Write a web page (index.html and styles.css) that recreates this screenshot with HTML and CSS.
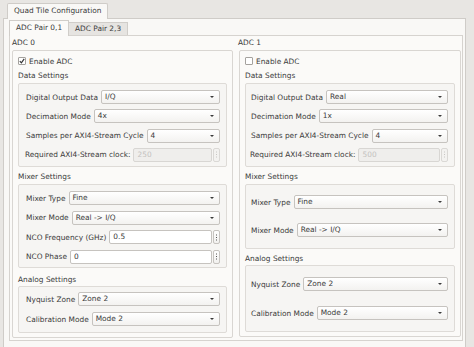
FILE: index.html
```html
<!DOCTYPE html>
<html>
<head>
<meta charset="utf-8">
<link rel="stylesheet" href="styles.css">
</head>
<body>
<div class="window">
  <div class="outer-tabs">
    <div class="otab">Quad Tile Configuration</div>
  </div>
  <div class="outer-pane">
    <div class="inner-tabs">
      <div class="itab active">ADC Pair 0,1</div>
      <div class="itab">ADC Pair 2,3</div>
    </div>
    <div class="inner-pane">
      <div class="col col-left">
        <div class="col-title">ADC 0</div>
        <div class="group">
          <div class="check-row">
            <span class="checkbox"><svg width="6" height="6" viewBox="0 0 6 6"><path d="M0.8 3.1 L2.4 4.8 L5.2 0.9" fill="none" stroke="#333" stroke-width="1.2"/></svg></span>
            <span>Enable ADC</span>
          </div>
          <div class="sec-title">Data Settings</div>
          <div class="box box-data">
            <div class="row"><span class="lbl">Digital Output Data</span><div class="combo">I/Q<i class="arrow"></i></div></div>
            <div class="row"><span class="lbl">Decimation Mode</span><div class="combo">4x<i class="arrow"></i></div></div>
            <div class="row"><span class="lbl">Samples per AXI4-Stream Cycle</span><div class="combo">4<i class="arrow"></i></div></div>
            <div class="row"><span class="lbl lbl-dis">Required AXI4-Stream clock:</span><div class="field disabled">250</div><div class="spin disabled"><i class="dots"></i></div></div>
          </div>
          <div class="sec-title sec-mixer">Mixer Settings</div>
          <div class="box box-mixer-l">
            <div class="row"><span class="lbl">Mixer Type</span><div class="combo">Fine<i class="arrow"></i></div></div>
            <div class="row"><span class="lbl">Mixer Mode</span><div class="combo">Real -&gt; I/Q<i class="arrow"></i></div></div>
            <div class="row"><span class="lbl">NCO Frequency (GHz)</span><div class="field">0.5</div><div class="spin"><i class="dots"></i></div></div>
            <div class="row"><span class="lbl">NCO Phase</span><div class="field">0</div><div class="spin"><i class="dots"></i></div></div>
          </div>
          <div class="sec-title sec-analog-l">Analog Settings</div>
          <div class="box box-analog-l">
            <div class="row"><span class="lbl">Nyquist Zone</span><div class="combo">Zone 2<i class="arrow"></i></div></div>
            <div class="row"><span class="lbl">Calibration Mode</span><div class="combo">Mode 2<i class="arrow"></i></div></div>
          </div>
        </div>
      </div>
      <div class="col col-right">
        <div class="col-title">ADC 1</div>
        <div class="group">
          <div class="check-row">
            <span class="checkbox"></span>
            <span>Enable ADC</span>
          </div>
          <div class="sec-title">Data Settings</div>
          <div class="box box-data">
            <div class="row"><span class="lbl">Digital Output Data</span><div class="combo">Real<i class="arrow"></i></div></div>
            <div class="row"><span class="lbl">Decimation Mode</span><div class="combo">1x<i class="arrow"></i></div></div>
            <div class="row"><span class="lbl">Samples per AXI4-Stream Cycle</span><div class="combo">4<i class="arrow"></i></div></div>
            <div class="row"><span class="lbl lbl-dis">Required AXI4-Stream clock:</span><div class="field disabled">500</div><div class="spin disabled"><i class="dots"></i></div></div>
          </div>
          <div class="sec-title sec-mixer">Mixer Settings</div>
          <div class="box box-mixer-r">
            <div class="row"><span class="lbl">Mixer Type</span><div class="combo">Fine<i class="arrow"></i></div></div>
            <div class="row"><span class="lbl">Mixer Mode</span><div class="combo">Real -&gt; I/Q<i class="arrow"></i></div></div>
          </div>
          <div class="sec-title sec-analog-r">Analog Settings</div>
          <div class="box box-analog-r">
            <div class="row"><span class="lbl">Nyquist Zone</span><div class="combo">Zone 2<i class="arrow"></i></div></div>
            <div class="row"><span class="lbl">Calibration Mode</span><div class="combo">Mode 2<i class="arrow"></i></div></div>
          </div>
        </div>
      </div>
    </div>
  </div>
</div>
</body>
</html>
```
FILE: styles.css
```css
* { box-sizing: border-box; }
html, body {
  margin: 0;
  padding: 0;
  background: #e8e6e3;
  font-family: "DejaVu Sans", "Liberation Sans", sans-serif;
  font-size: 7.4px;
  color: #3a3a3a;
  overflow: hidden;
}
.window {
  width: 474px;
  height: 347px;
  display: flex;
  flex-direction: column;
}
.outer-tabs {
  height: 18px;
  display: flex;
  align-items: flex-end;
  padding-left: 7px;
}
.otab {
  position: relative;
  z-index: 1;
  height: 16px;
  margin-bottom: -1px;
  width: 101px;
  padding-left: 6px;
  line-height: 14px;
  white-space: nowrap;
  background: #f9f8f6;
  border: 1px solid #cfccc8;
  border-bottom: none;
  border-radius: 2px 2px 0 0;
}
.outer-pane {
  flex: 1;
  margin-left: 3px;
  width: 463px;
  background: #f9f8f6;
  border: 1px solid #cfccc8;
  border-bottom: none;
  display: flex;
  flex-direction: column;
}
.inner-tabs {
  height: 16px;
  display: flex;
  align-items: flex-end;
  padding-left: 5px;
}
.itab {
  height: 13px;
  line-height: 12px;
  padding-left: 6px;
  width: 59px;
  white-space: nowrap;
  background: #e6e4e1;
  border: 1px solid #d0cdc9;
  border-bottom: none;
  border-left: none;
}
.itab.active {
  position: relative;
  z-index: 1;
  height: 16px;
  margin-bottom: -1px;
  line-height: 14px;
  width: 60px;
  background: #fbfaf8;
  border-left: 1px solid #d0cdc9;
}
.inner-pane {
  margin-left: 5px;
  width: 454px;
  height: 306px;
  background: #fbfaf8;
  border: 1px solid #d6d3cf;
  padding: 0 1px 0 2px;
  display: flex;
  gap: 5px;
}
.col {
  display: flex;
  flex-direction: column;
}
.col-left { width: 221px; }
.col-right { width: 223px; }
.col-right .group { margin-left: 1px; }
.col-right .box { padding-left: 4px; }
.col-title {
  height: 14px;
  line-height: 14px;
}
.group {
  border: 1px solid #d9d6d2;
  border-radius: 2px;
  padding: 3px 5px 4px 5px;
  display: flex;
  flex-direction: column;
}
.col-left .group { height: 288px; }
.col-right .group { height: 287px; }
.check-row {
  height: 14px;
  display: flex;
  align-items: center;
  gap: 3px;
}
.checkbox {
  width: 8px;
  height: 8px;
  border: 1px solid #a5a29e;
  border-radius: 1px;
  background: #ffffff;
  display: flex;
  align-items: center;
  justify-content: center;
}
.sec-title {
  height: 15px;
  padding-top: 1px;
  line-height: 14px;
}
.sec-mixer { height: 17px; padding-top: 3px; }
.sec-analog-l { height: 18px; padding-top: 5px; }
.sec-analog-r { height: 16px; padding-top: 3px; }
.box {
  border: 1px solid #dedbd7;
  border-radius: 2px;
  background: #f6f5f3;
  padding: 6px 6px 0 6px;
  display: flex;
  flex-direction: column;
}
.box-data { height: 84px; gap: 5.3px; }
.box-mixer-l { height: 84px; gap: 5.5px; }
.box-analog-l { height: 47px; gap: 6px; padding-top: 5px; }
.box-mixer-r { height: 65px; padding-top: 10px; gap: 14px; }
.box-analog-r { height: 67px; padding-top: 11px; gap: 15px; }
.row {
  height: 14px;
  display: flex;
  align-items: center;
}
.lbl {
  white-space: nowrap;
  padding-left: 1px;
  margin-right: 3px;
}
.lbl-dis { padding-left: 0; }
.combo {
  flex: 1;
  height: 14px;
  line-height: 12px;
  border: 1px solid #c6c3bf;
  border-radius: 2px;
  background: linear-gradient(#ffffff, #f3f2f0);
  padding-left: 3px;
  position: relative;
}
.arrow {
  position: absolute;
  right: 5px;
  top: 5px;
  width: 0;
  height: 0;
  border-left: 2px solid transparent;
  border-right: 2px solid transparent;
  border-top: 2.5px solid #3a3a3a;
}
.field {
  flex: 1;
  height: 14px;
  line-height: 12px;
  border: 1px solid #c6c3bf;
  border-radius: 2px;
  background: #ffffff;
  padding-left: 3px;
}
.field.disabled {
  background: #efeeec;
  border-color: #d8d6d3;
  color: #c4c2bf;
}
.spin {
  width: 7px;
  height: 14px;
  margin-left: 1px;
  border: 1px solid #c6c3bf;
  border-radius: 2px;
  background: linear-gradient(#ffffff, #f1f0ee);
  display: flex;
  align-items: center;
  justify-content: center;
}
.dots {
  width: 1px;
  height: 1px;
  background: #555;
  box-shadow: 0 -2.5px 0 #555, 0 2.5px 0 #555;
}
.spin.disabled {
  border-color: #dad8d5;
  background: #f3f2f0;
}
.spin.disabled .dots {
  background: #c8c6c3;
  box-shadow: 0 -2.5px 0 #c8c6c3, 0 2.5px 0 #c8c6c3;
}
```
